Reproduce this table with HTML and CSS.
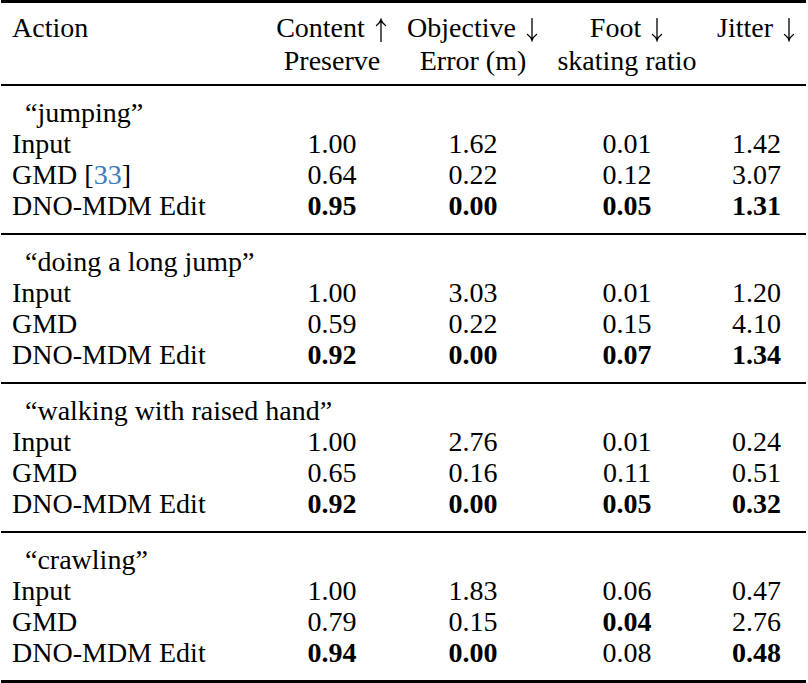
FILE: index.html
```html
<!DOCTYPE html>
<html>
<head>
<meta charset="utf-8">
<link rel="stylesheet" href="styles.css">
</head>
<body>
<div class="table">
  <div class="head row">
    <div class="c1">Action</div>
    <div class="cn"><span class="l">Content <svg class="arr" viewBox="0 0 14 24" width="14" height="24"><path d="M7 23.5V1.5M2.5 7.5Q6 5 7 1.5Q8 5 11.5 7.5"/></svg></span><span class="l">Preserve</span></div>
    <div class="cn"><span class="l">Objective <svg class="arr" viewBox="0 0 14 24" width="14" height="24"><path d="M7 0.5V22.5M2.5 16.5Q6 19 7 22.5Q8 19 11.5 16.5"/></svg></span><span class="l">Error (m)</span></div>
    <div class="cn"><span class="l">Foot <svg class="arr" viewBox="0 0 14 24" width="14" height="24"><path d="M7 0.5V22.5M2.5 16.5Q6 19 7 22.5Q8 19 11.5 16.5"/></svg></span><span class="l">skating ratio</span></div>
    <div class="cn"><span class="l">Jitter <svg class="arr" viewBox="0 0 14 24" width="14" height="24"><path d="M7 0.5V22.5M2.5 16.5Q6 19 7 22.5Q8 19 11.5 16.5"/></svg></span></div>
  </div>

  <div class="group">
    <div class="label">“jumping”</div>
    <div class="row"><div class="c1">Input</div><div class="cn">1.00</div><div class="cn">1.62</div><div class="cn">0.01</div><div class="cn">1.42</div></div>
    <div class="row"><div class="c1">GMD [<span class="cite">33</span>]</div><div class="cn">0.64</div><div class="cn">0.22</div><div class="cn">0.12</div><div class="cn">3.07</div></div>
    <div class="row"><div class="c1">DNO-MDM Edit</div><div class="cn b">0.95</div><div class="cn b">0.00</div><div class="cn b">0.05</div><div class="cn b">1.31</div></div>
  </div>

  <div class="group">
    <div class="label">“doing a long jump”</div>
    <div class="row"><div class="c1">Input</div><div class="cn">1.00</div><div class="cn">3.03</div><div class="cn">0.01</div><div class="cn">1.20</div></div>
    <div class="row"><div class="c1">GMD</div><div class="cn">0.59</div><div class="cn">0.22</div><div class="cn">0.15</div><div class="cn">4.10</div></div>
    <div class="row"><div class="c1">DNO-MDM Edit</div><div class="cn b">0.92</div><div class="cn b">0.00</div><div class="cn b">0.07</div><div class="cn b">1.34</div></div>
  </div>

  <div class="group">
    <div class="label">“walking with raised hand”</div>
    <div class="row"><div class="c1">Input</div><div class="cn">1.00</div><div class="cn">2.76</div><div class="cn">0.01</div><div class="cn">0.24</div></div>
    <div class="row"><div class="c1">GMD</div><div class="cn">0.65</div><div class="cn">0.16</div><div class="cn">0.11</div><div class="cn">0.51</div></div>
    <div class="row"><div class="c1">DNO-MDM Edit</div><div class="cn b">0.92</div><div class="cn b">0.00</div><div class="cn b">0.05</div><div class="cn b">0.32</div></div>
  </div>

  <div class="group last">
    <div class="label">“crawling”</div>
    <div class="row"><div class="c1">Input</div><div class="cn">1.00</div><div class="cn">1.83</div><div class="cn">0.06</div><div class="cn">0.47</div></div>
    <div class="row"><div class="c1">GMD</div><div class="cn">0.79</div><div class="cn">0.15</div><div class="cn b">0.04</div><div class="cn">2.76</div></div>
    <div class="row"><div class="c1">DNO-MDM Edit</div><div class="cn b">0.94</div><div class="cn b">0.00</div><div class="cn">0.08</div><div class="cn b">0.48</div></div>
  </div>
</div>
</body>
</html>
```

FILE: styles.css
```css
html, body {
  margin: 0;
  padding: 0;
  background: #ffffff;
}
body {
  font-family: "Liberation Serif", "Times New Roman", serif;
  font-size: 28px;
  color: #000;
}
.table {
  width: 805px;
  margin-left: 1px;
}
.row {
  display: grid;
  grid-template-columns: 264px 134px 148px 160px 99px;
  line-height: 31px;
  height: 31px;
  white-space: nowrap;
}
.head {
  height: auto;
  line-height: 33px;
  border-top: 3px solid #000;
  border-bottom: 2px solid #000;
  padding: 8px 0 7px;
  align-items: start;
}
.c1 {
  padding-left: 11px;
}
.cn {
  text-align: center;
}
.head .cn {
  display: flex;
  flex-direction: column;
  align-items: center;
}
.l {
  display: block;
  height: 33px;
}
.arr {
  display: inline-block;
  vertical-align: -5px;
  margin-left: 2px;
  fill: none;
  stroke: #000;
  stroke-width: 1.3;
  stroke-linecap: round;
}
.b {
  font-weight: bold;
}
.cite {
  color: #3b7bbd;
}
.group {
  padding: 11px 0 12px;
  border-bottom: 2px solid #000;
}
.group.last {
  border-bottom-width: 3px;
}
.label {
  line-height: 31px;
  height: 31px;
  padding-left: 24px;
  white-space: nowrap;
}
```
